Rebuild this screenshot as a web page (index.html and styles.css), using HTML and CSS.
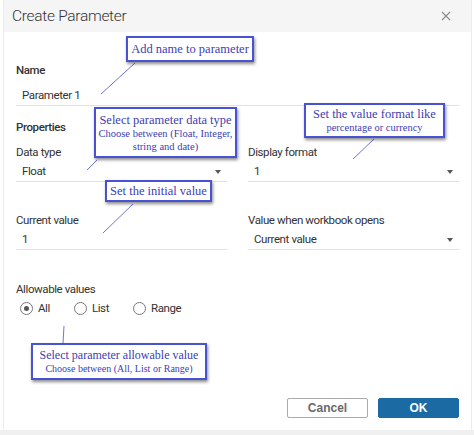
FILE: index.html
```html
<!DOCTYPE html>
<html lang="en">
<head>
    <meta charset="UTF-8">
    <meta name="viewport" content="width=device-width, initial-scale=1.0">
    <title>Create Parameter</title>
    <link rel="stylesheet" href="styles.css">
</head>
<body>

    <div class="dialog">
        <div class="dialog-header">
            <span class="dialog-title">Create Parameter</span>
            <svg class="close" width="10" height="10" viewBox="0 0 10 10">
                <path d="M1 1 L9 9 M9 1 L1 9" stroke="#8a8a8a" stroke-width="1.1" fill="none"/>
            </svg>
        </div>

        <div class="dialog-body">
            <div class="section-label label-name">Name</div>
            <div class="field">Parameter 1</div>

            <div class="section-label label-props">Properties</div>
            <div class="props-grid">
                <div class="prop">
                    <div class="prop-label">Data type</div>
                    <div class="field select">Float<span class="caret"></span></div>
                </div>
                <div class="prop">
                    <div class="prop-label">Display format</div>
                    <div class="field select">1<span class="caret"></span></div>
                </div>
                <div class="prop prop-low">
                    <div class="prop-label">Current value</div>
                    <div class="field">1</div>
                </div>
                <div class="prop prop-low">
                    <div class="prop-label">Value when workbook opens</div>
                    <div class="field select">Current value<span class="caret"></span></div>
                </div>
            </div>

            <div class="prop-label label-allow">Allowable values</div>
            <div class="radios">
                <label class="radio checked"><span class="dot"></span>All</label>
                <label class="radio"><span class="dot"></span>List</label>
                <label class="radio"><span class="dot"></span>Range</label>
            </div>
        </div>

        <div class="dialog-footer">
            <button class="btn btn-cancel">Cancel</button>
            <button class="btn btn-ok">OK</button>
        </div>
    </div>
    <div class="bottom-strip"></div>

    <!-- annotations laid over the dialog -->
    <svg class="connectors" width="474" height="435" viewBox="0 0 474 435">
        <g stroke="#6d74d6" stroke-width="1" fill="none">
            <line x1="135" y1="63" x2="101" y2="94"/>
            <line x1="97" y1="160" x2="87" y2="170"/>
            <line x1="374" y1="139" x2="353" y2="159"/>
            <line x1="133" y1="204" x2="103" y2="233"/>
            <line x1="64" y1="326" x2="63" y2="343"/>
        </g>
    </svg>

    <div class="callout callout-name">Add name to parameter</div>
    <div class="callout callout-type">
        Select parameter data type
        <small>Choose between (Float, Integer, string and date)</small>
    </div>
    <div class="callout callout-format">
        Set the value format like
        <small>percentage or currency</small>
    </div>
    <div class="callout callout-initial">Set the initial value</div>
    <div class="callout callout-allow">
        Select parameter allowable value
        <small>Choose between (All, List or Range)</small>
    </div>

</body>
</html>
```

FILE: styles.css
```css
body {
    margin: 0;
    width: 474px;
    height: 435px;
    overflow: hidden;
    position: relative;
    background: #fff;
    font-family: Roboto, "Noto Sans", sans-serif;
    color: #333;
}

.dialog {
    height: 430px;
    margin-left: 3px;
    width: 467px;
    border-left: 1px solid #ececec;
    border-right: 1px solid #ececec;
    display: flex;
    flex-direction: column;
}

.dialog-header {
    height: 32px;
    background: #f5f5f5;
    display: flex;
    align-items: center;
    justify-content: space-between;
    padding: 0 20px 0 8px;
    flex-shrink: 0;
}

.dialog-title {
    font-size: 15.5px;
    font-weight: 300;
    letter-spacing: -0.3px;
    color: #333;
}

.dialog-body {
    padding: 0 12px;
    display: flex;
    flex-direction: column;
    font-size: 11.5px;
    letter-spacing: -0.4px;
}

.section-label {
    line-height: 16px;
    font-weight: 500;
    color: #333;
}

.label-name { margin-top: 30px; }
.label-props { margin-top: 13px; }

.field {
    height: 19px;
    line-height: 19px;
    padding-left: 6px;
    border-bottom: 1px solid #e2e2e2;
    position: relative;
    margin-top: 8px;
}

.props-grid {
    display: grid;
    grid-template-columns: 1fr 1fr;
    column-gap: 21px;
    margin-top: 9px;
}

.prop .field { margin-top: 2px; }
.prop-low { margin-top: 30px; }

.prop-label {
    line-height: 16px;
    color: #333;
}

.select .caret {
    position: absolute;
    right: 6px;
    top: 8px;
    width: 0;
    height: 0;
    border-left: 3px solid transparent;
    border-right: 3px solid transparent;
    border-top: 4px solid #555;
}

.label-allow { margin-top: 31px; }

.radios {
    display: flex;
    gap: 24px;
    margin-top: 3px;
    padding-left: 4px;
    line-height: 16px;
}

.radio {
    display: flex;
    align-items: center;
    gap: 5px;
}

.dot {
    width: 11px;
    height: 11px;
    border: 1px solid #777;
    border-radius: 50%;
    display: flex;
    align-items: center;
    justify-content: center;
}

.checked .dot::after {
    content: "";
    width: 5px;
    height: 5px;
    border-radius: 50%;
    background: #555;
}

.dialog-footer {
    margin-top: auto;
    display: flex;
    justify-content: flex-end;
    gap: 10px;
    padding: 0 12px 12px 0;
}

.btn {
    width: 81px;
    height: 20px;
    font-family: "Liberation Sans", Arial, sans-serif;
    font-size: 12px;
    font-weight: bold;
    border-radius: 2px;
    padding: 0;
}

.btn-cancel {
    background: #fff;
    color: #6a6a6a;
    border: 1px solid #aaa;
}

.btn-ok {
    background: #1c6aa3;
    color: #fff;
    border: 1px solid #1c6aa3;
}

.bottom-strip {
    height: 5px;
    background: #f0f0f0;
}

/* annotations */
.connectors {
    position: absolute;
    left: 0;
    top: 0;
}

.callout {
    position: absolute;
    box-sizing: border-box;
    background: #fff;
    border: 2px solid #4a52d4;
    box-shadow: 1px 2px 3px rgba(0, 0, 0, 0.45);
    font-family: "Liberation Serif", "Times New Roman", serif;
    color: #3d40b3;
    font-size: 12.5px;
    line-height: 14px;
    text-align: center;
    display: flex;
    flex-direction: column;
    justify-content: center;
}

.callout small {
    display: block;
    font-size: 10.5px;
    line-height: 13px;
}

.callout-name { left: 126px; top: 36px; width: 128px; height: 26px; }
.callout-type { left: 94px; top: 107px; width: 143px; height: 51px; }
.callout-format { left: 304px; top: 103px; width: 141px; height: 35px; }
.callout-initial { left: 105px; top: 180px; width: 107px; height: 22px; }
.callout-allow { left: 31px; top: 343px; width: 176px; height: 37px; font-size: 12px; }
.callout-allow small { font-size: 10px; }
```
